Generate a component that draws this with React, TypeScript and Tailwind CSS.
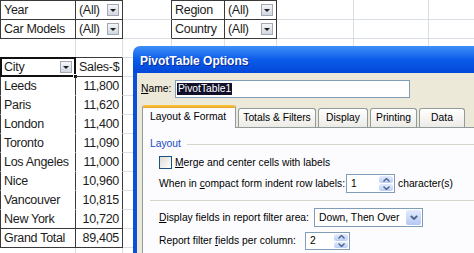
import React from "react";

const COLS = [76, 47, 49, 53, 52, 77, 75, 75];
const ROW_H = [20, 19, 19, 19, 19, 19, 19, 19, 19, 19, 19, 19, 19, 16];

type Cell = {
  t?: string;
  btn?: boolean;
  right?: boolean;
  dl?: boolean;
  dt?: boolean;
  dr?: boolean;
  db?: boolean;
  hb?: boolean;
  sel?: boolean;
};

const CITIES: [string, string][] = [
  ["Leeds", "11,800"],
  ["Paris", "11,620"],
  ["London", "11,400"],
  ["Toronto", "11,090"],
  ["Los Angeles", "11,000"],
  ["Nice", "10,960"],
  ["Vancouver", "10,815"],
  ["New York", "10,720"],
];

const ROWS: Cell[][] = [
  [
    { t: "Year", dl: true, dt: true, dr: true, db: true },
    { t: "(All)", btn: true, dt: true, dr: true, db: true },
    { dr: true },
    { t: "Region", dt: true, dr: true, db: true },
    { t: "(All)", btn: true, dt: true, dr: true, db: true },
  ],
  [
    { t: "Car Models", dl: true, dr: true, db: true },
    { t: "(All)", btn: true, dr: true, db: true },
    { dr: true },
    { t: "Country", dr: true, db: true },
    { t: "(All)", btn: true, dr: true, db: true },
  ],
  [{ db: true }, { db: true }],
  [
    { t: "City", btn: true, dl: true, dr: true, db: true, sel: true },
    { t: "Sales-$", dr: true, db: true },
  ],
  ...CITIES.map(([c, v], i): Cell[] => {
    const last = i === CITIES.length - 1;
    return [
      { t: c, dl: true, dr: true, db: last, hb: !last },
      { t: v, right: true, dr: true, db: last, hb: !last },
    ];
  }),
  [
    { t: "Grand Total", dl: true, dr: true, db: true },
    { t: "89,405", right: true, dr: true, db: true },
  ],
  [],
];

function DropBtn() {
  return (
    <span className="flex h-[12px] w-[12px] shrink-0 items-center justify-center border border-[#a3a9b3] bg-linear-to-b from-[#f4f6f9] to-[#d2d8e2]">
      <span className="h-0 w-0 border-x-[3px] border-t-[3px] border-x-transparent border-t-[#1e1e1e]" />
    </span>
  );
}

function SheetCell({ cell, w, h }: { cell: Cell; w: number; h: number }) {
  return (
    <div
      className={`relative flex shrink-0 items-center border-b border-r px-[3px] text-[12.5px] tracking-[-0.3px] text-[#1c1c1c] ${
        cell.dr ? "border-r-[#3a3a3a]" : "border-r-[#dadee5]"
      } ${cell.db ? "border-b-[#3a3a3a]" : cell.hb ? "border-b-white" : "border-b-[#dadee5]"} ${
        cell.dl ? "border-l border-l-[#3a3a3a]" : ""
      } ${cell.dt ? "border-t border-t-[#3a3a3a]" : ""} ${cell.right ? "justify-end" : "justify-between"}`}
      style={{ width: w, height: h }}
    >
      {cell.t && <span className="whitespace-nowrap leading-none">{cell.t}</span>}
      {cell.btn && <DropBtn />}
      {cell.sel && (
        <>
          <span className="pointer-events-none absolute inset-[-1px] border-2 border-[#111]" />
          <span className="absolute bottom-[-3px] right-[-3px] h-[5px] w-[5px] border border-white bg-[#111]" />
        </>
      )}
    </div>
  );
}

function Sheet() {
  return (
    <div className="flex flex-col">
      {ROW_H.map((h, r) => (
        <div key={r} className="flex">
          {COLS.map((w, c) => (
            <SheetCell key={c} cell={ROWS[r]?.[c] ?? {}} w={w} h={h} />
          ))}
        </div>
      ))}
    </div>
  );
}

function Spin({ value, w }: { value: string; w: number }) {
  return (
    <div
      className="flex h-full items-stretch border border-[#7f9db9] bg-white p-[1px]"
      style={{ width: w }}
    >
      <span className="flex flex-1 items-center pl-[3px]">{value}</span>
      <span className="flex w-[14px] flex-col gap-px">
        <span className="flex flex-1 items-center justify-center rounded-[2px] bg-linear-to-b from-[#e3ecfe] to-[#b9cdf6]">
          <svg width="7" height="4" viewBox="0 0 7 4">
            <path d="M0.5 3.5 L3.5 0.5 L6.5 3.5" fill="none" stroke="#4d6185" strokeWidth="1.4" />
          </svg>
        </span>
        <span className="flex flex-1 items-center justify-center rounded-[2px] bg-linear-to-b from-[#e3ecfe] to-[#b9cdf6]">
          <svg width="7" height="4" viewBox="0 0 7 4">
            <path d="M0.5 0.5 L3.5 3.5 L6.5 0.5" fill="none" stroke="#4d6185" strokeWidth="1.4" />
          </svg>
        </span>
      </span>
    </div>
  );
}

function Select({ value, w }: { value: string; w: number }) {
  return (
    <div
      className="flex h-full items-stretch border border-[#7f9db9] bg-white p-[1px]"
      style={{ width: w }}
    >
      <span className="flex flex-1 items-center pl-[3px]">{value}</span>
      <span className="flex w-[15px] items-center justify-center rounded-[2px] bg-linear-to-b from-[#e3ecfe] to-[#b4c8f4]">
        <svg width="8" height="5" viewBox="0 0 8 5">
          <path d="M0.8 0.8 L4 4 L7.2 0.8" fill="none" stroke="#4d6185" strokeWidth="1.8" />
        </svg>
      </span>
    </div>
  );
}

const TABS = [
  { label: "Totals & Filters", w: 78 },
  { label: "Display", w: 50 },
  { label: "Printing", w: 47 },
  { label: "Data", w: 46 },
];

function Dialog() {
  return (
    <div className="absolute left-[133px] top-[46px] flex w-[350px] flex-col text-[10.3px] text-black">
      {/* title bar */}
      <div className="flex h-[27px] items-center rounded-tl-[7px] bg-linear-to-b from-[#3d8ef8] via-[#0b5ce9] to-[#0448d8] pl-[7px] pt-[2px]">
        <span className="text-[12px] font-bold text-white [text-shadow:1px_1px_0_#0b2a9a]">
          PivotTable Options
        </span>
      </div>
      {/* body */}
      <div className="flex h-[180px] flex-col border-l-4 border-l-[#0a50dc] bg-[#ece9d8]">
        <div className="mt-[7px] flex h-[18px] items-center pl-[4px]">
          <span className="w-[34px]">
            <u>N</u>ame:
          </span>
          <div className="flex h-full w-[235px] items-center border border-[#7f9db9] bg-white pl-px">
            <span className="bg-[#10102a] px-px leading-[12px] text-white">PivotTable1</span>
          </div>
        </div>

        {/* tabs */}
        <div className="relative z-10 mt-[7px] flex h-[22px] items-end pl-[5px]">
          <div className="-mb-px flex h-[23px] w-[94px] flex-col overflow-hidden rounded-t-[3px] border-x border-[#919b9c] bg-[#fcfcfe]">
            <span className="h-[3px] bg-linear-to-b from-[#ffc73c] to-[#e6a22c]" />
            <span className="flex flex-1 items-center pl-[7px] pb-[2px]">Layout &amp; Format</span>
          </div>
          {TABS.map((t) => (
            <div
              key={t.label}
              className="ml-[2px] flex h-[19px] items-center justify-center rounded-t-[3px] border-x border-t border-[#919b9c] bg-linear-to-b from-[#ffffff] to-[#ecebe6]"
              style={{ width: t.w }}
            >
              {t.label}
            </div>
          ))}
        </div>

        {/* panel */}
        <div className="ml-[5px] flex flex-1 flex-col border-l border-t border-[#919b9c] bg-[#fcfcfe]">
          <div className="mt-[10px] flex h-[12px] items-center pl-[7px] pr-[8px]">
            <span className="text-[#1a48c8]">Layout</span>
            <span className="ml-[6px] h-px flex-1 bg-[#d6d5c8]" />
          </div>
          <div className="mt-[6px] flex h-[13px] items-center pl-[16px]">
            <span className="h-[13px] w-[13px] border border-[#1c5180] bg-linear-to-br from-[#dcdcd6] to-white" />
            <span className="ml-[3px]">
              <u>M</u>erge and center cells with labels
            </span>
          </div>
          <div className="mt-[5px] flex h-[19px] items-center pl-[16px]">
            <span className="w-[187px] whitespace-nowrap">
              When in <u>c</u>ompact form indent row labels:
            </span>
            <Spin value="1" w={49} />
            <span className="ml-[3px]">character(s)</span>
          </div>
          <div className="ml-[7px] mr-[5px] mt-[7px] h-px bg-[#d6d5c8]" />
          <div className="mt-[7px] flex h-[19px] items-center pl-[16px]">
            <span className="w-[155px] whitespace-nowrap">
              <u>D</u>isplay fields in report filter area:
            </span>
            <Select value="Down, Then Over" w={109} />
          </div>
          <div className="mt-[5px] flex h-[18px] items-center pl-[16px]">
            <span className="w-[146px] whitespace-nowrap">
              Report filter <u>f</u>ields per column:
            </span>
            <Spin value="2" w={45} />
          </div>
        </div>
      </div>
    </div>
  );
}

export default function App() {
  return (
    <div className="relative h-[253px] w-[474px] overflow-hidden bg-white font-['Liberation_Sans',Arial,sans-serif]">
      <Sheet />
      <Dialog />
    </div>
  );
}
